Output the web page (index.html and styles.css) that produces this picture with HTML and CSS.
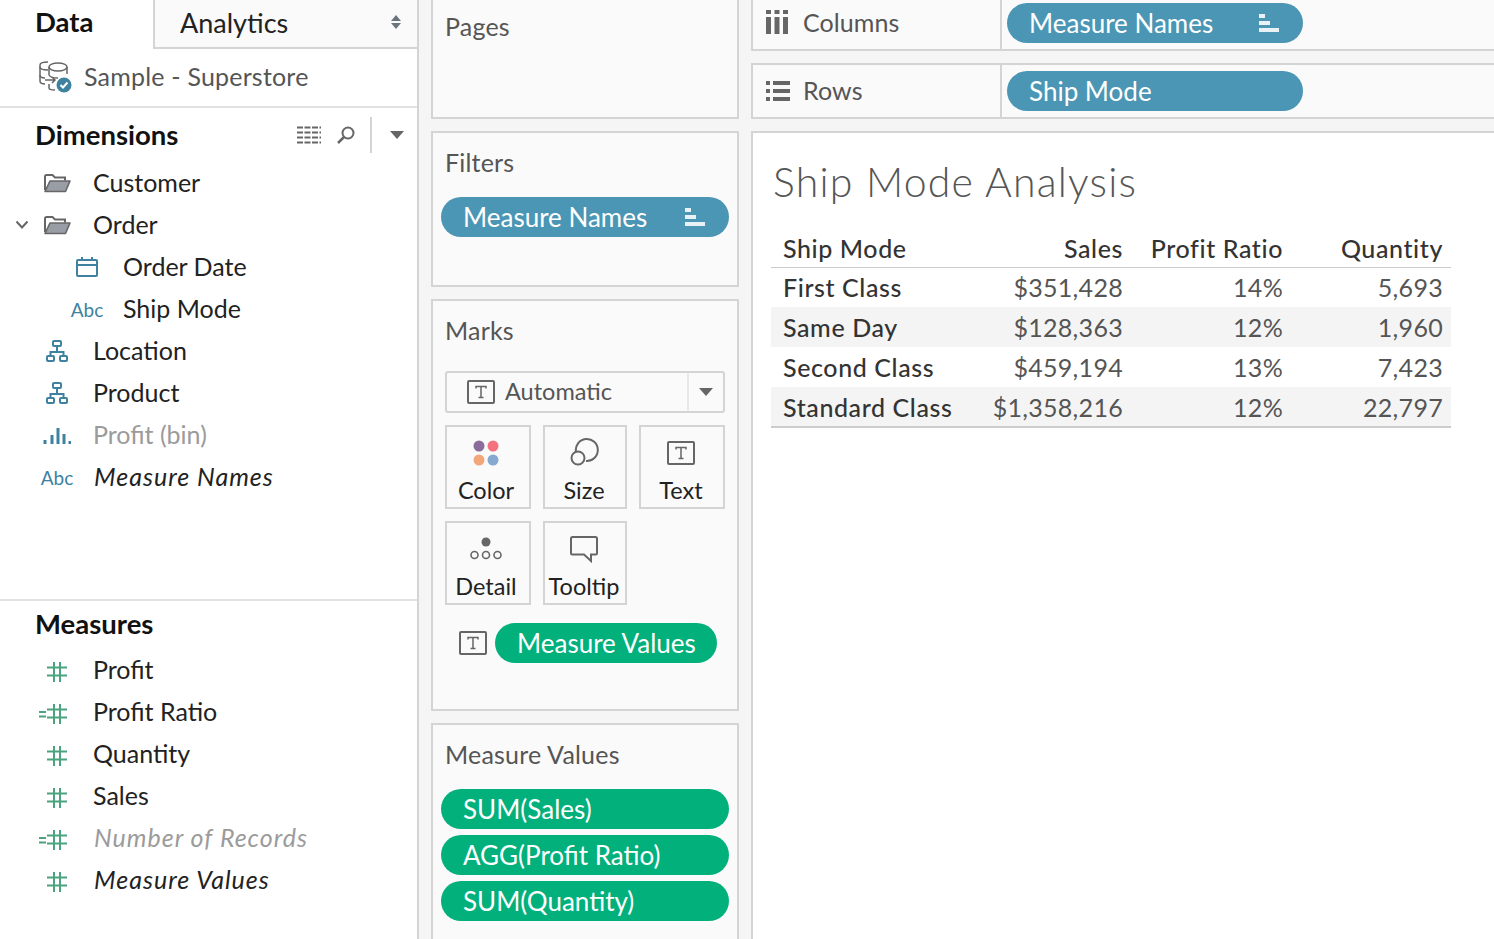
FILE: index.html
```html
<!DOCTYPE html>
<html lang="en">
<head>
<meta charset="utf-8">
<title>Ship Mode Analysis</title>
<link rel="stylesheet" href="styles.css">
</head>
<body>
<svg class="defs" width="0" height="0" aria-hidden="true">
  <defs>
    <symbol id="folder" viewBox="0 0 28 20">
      <path d="M2 17V3.500C2 2.700 2.600 2 3.500 2H9.500L12 4.500H22V7.500" fill="none" stroke="#666" stroke-width="2"/>
      <path d="M7 8H27L22.500 18.500H2Z" fill="#999ea6" stroke="#666" stroke-width="1.600" stroke-linejoin="round"/>
    </symbol>
    <symbol id="hier" viewBox="0 0 24 24">
      <g fill="none" stroke="#3f82a0" stroke-width="2">
        <rect x="8" y="2" width="8" height="5" rx="1"/>
        <rect x="2" y="17" width="7" height="5" rx="1"/>
        <rect x="15" y="17" width="7" height="5" rx="1"/>
        <path d="M12 7V13M5.500 17V13H18.500V17"/>
      </g>
    </symbol>
    <symbol id="hash" viewBox="0 0 20 20">
      <path d="M7 0V20M13 0V20M0 5.500H20M0 13.500H20" fill="none" stroke="#4ba37d" stroke-width="2"/>
    </symbol>
    <symbol id="calc" viewBox="0 0 7 7">
      <path d="M0 1H7M0 5.500H7" fill="none" stroke="#4ba37d" stroke-width="2"/>
    </symbol>
    <symbol id="tbox" viewBox="0 0 28 24">
      <rect x="1" y="1" width="26" height="22" rx="1" fill="none" stroke="#666" stroke-width="2"/>
      <path d="M9 8.500V6.500H19V8.500M14 6.500V17.500M11.500 17.500H16.500" fill="none" stroke="#666" stroke-width="1.500"/>
    </symbol>
    <symbol id="sortbars" viewBox="0 0 20 20">
      <path d="M0 1H6V5H0ZM0 8H11V12H0ZM0 15H20V19H0Z" fill="#e8f1f5"/>
    </symbol>
  </defs>
</svg>
<div class="app">
  <aside class="data-pane">
    <div class="tabs">
      <div class="tab-active">Data</div>
      <div class="tab-other">
        <span>Analytics</span>
        <svg class="updown" width="12" height="16" viewBox="0 0 12 16"><path d="M6 1L11 7H1ZM1 9H11L6 15Z" fill="#6c7480"/></svg>
      </div>
    </div>
    <div class="source">
      <svg class="db-icon" width="34" height="34" viewBox="0 0 34 34">
        <g fill="none" stroke="#666" stroke-width="1.500">
          <path d="M10 3C6 3 2 4 2 6V22C2 24 4 25 7 25"/>
          <path d="M2 8C2 10 6 11 10 11M2 16C2 18 4 19 7 19"/>
          <ellipse cx="20" cy="8" rx="9" ry="4"/>
          <path d="M11 8V16M29 8V15M11 16C12 18 16 19 20 19"/>
          <path d="M7 21H17M14 18L17 21L14 24"/>
          <path d="M11 25V29C11 30 13 31 17 31"/>
        </g>
        <circle cx="26" cy="26" r="7.500" fill="#3f82a0"/>
        <path d="M22.500 26L25 28.500L29.500 23.500" fill="none" stroke="#fff" stroke-width="2"/>
      </svg>
      <span>Sample - Superstore</span>
    </div>
    <section class="dims">
      <div class="pane-head">
        <h2>Dimensions</h2>
        <div class="head-tools">
          <svg width="24" height="18" viewBox="0 0 24 18"><path d="M0 1.500H24M0 6.500H24M0 11.500H24M0 16.500H24" stroke="#666" stroke-width="2" stroke-dasharray="6 1.500" fill="none"/></svg>
          <svg class="search" width="20" height="20" viewBox="0 0 20 20"><circle cx="12" cy="8" r="5.500" fill="none" stroke="#666" stroke-width="2"/><path d="M8 12L2 18" stroke="#666" stroke-width="2.500"/></svg>
          <i class="tool-sep"></i>
          <i class="caret"></i>
        </div>
      </div>
      <div class="field"><span class="slot"></span><span class="ico"><svg width="28" height="20"><use href="#folder"/></svg></span><span>Customer</span></div>
      <div class="field"><span class="slot"><svg width="14" height="10" viewBox="0 0 14 10"><path d="M1.500 1.500L7 7.500L12.500 1.500" fill="none" stroke="#666" stroke-width="2"/></svg></span><span class="ico"><svg width="28" height="20"><use href="#folder"/></svg></span><span>Order</span></div>
      <div class="field nested"><span class="slot"></span><span class="ico"><svg width="24" height="22" viewBox="0 0 24 22"><g fill="none" stroke="#3f82a0" stroke-width="2"><rect x="2" y="4" width="20" height="16" rx="1"/><path d="M2 9H22M7 1V5M17 1V5"/></g></svg></span><span>Order Date</span></div>
      <div class="field nested"><span class="slot"></span><span class="ico abc">Abc</span><span>Ship Mode</span></div>
      <div class="field"><span class="slot"></span><span class="ico"><svg width="24" height="24"><use href="#hier"/></svg></span><span>Location</span></div>
      <div class="field"><span class="slot"></span><span class="ico"><svg width="24" height="24"><use href="#hier"/></svg></span><span>Product</span></div>
      <div class="field muted"><span class="slot"></span><span class="ico"><svg width="28" height="20" viewBox="0 0 28 20"><path d="M2 15V19M9 10V19M15 3V19M21 9V19M27 16V19" stroke="#3f82a0" stroke-width="3" fill="none"/></svg></span><span>Profit (bin)</span></div>
      <div class="field generated"><span class="slot"></span><span class="ico abc">Abc</span><span>Measure Names</span></div>
    </section>
    <section class="meas">
      <div class="pane-head meas-head"><h2>Measures</h2></div>
      <div class="field"><span class="slot"></span><span class="ico"><svg width="20" height="20"><use href="#hash"/></svg></span><span>Profit</span></div>
      <div class="field"><span class="slot"></span><span class="ico"><svg class="calc" width="7" height="7"><use href="#calc"/></svg><svg width="20" height="20"><use href="#hash"/></svg></span><span>Profit Ratio</span></div>
      <div class="field"><span class="slot"></span><span class="ico"><svg width="20" height="20"><use href="#hash"/></svg></span><span>Quantity</span></div>
      <div class="field"><span class="slot"></span><span class="ico"><svg width="20" height="20"><use href="#hash"/></svg></span><span>Sales</span></div>
      <div class="field generated muted"><span class="slot"></span><span class="ico"><svg class="calc" width="7" height="7"><use href="#calc"/></svg><svg width="20" height="20"><use href="#hash"/></svg></span><span>Number of Records</span></div>
      <div class="field generated"><span class="slot"></span><span class="ico"><svg width="20" height="20"><use href="#hash"/></svg></span><span>Measure Values</span></div>
    </section>
  </aside>

  <div class="cards">
    <section class="card card-pages"><h3>Pages</h3></section>
    <section class="card card-filters">
      <h3>Filters</h3>
      <div class="pill blue between">Measure Names<svg width="20" height="20"><use href="#sortbars"/></svg></div>
    </section>
    <section class="card card-marks">
      <h3>Marks</h3>
      <div class="mark-type">
        <div class="mark-name"><svg width="28" height="24"><use href="#tbox"/></svg><span>Automatic</span></div>
        <div class="mark-drop"><i class="caret"></i></div>
      </div>
      <div class="tiles">
        <div class="tile tile-color">
          <svg width="28" height="28" viewBox="0 0 28 28"><circle cx="7" cy="7" r="5.500" fill="#8a6d9b"/><circle cx="21" cy="7" r="5.500" fill="#f4717f"/><circle cx="7" cy="21" r="5.500" fill="#f2a77b"/><circle cx="21" cy="21" r="5.500" fill="#85a9cf"/></svg>
          <span>Color</span>
        </div>
        <div class="tile tile-size">
          <svg width="30" height="28" viewBox="0 0 30 28"><path d="M7 14A11 11 0 1 1 17 23" fill="none" stroke="#666" stroke-width="2"/><circle cx="9" cy="20" r="6.500" fill="none" stroke="#666" stroke-width="2"/></svg>
          <span>Size</span>
        </div>
        <div class="tile tile-text">
          <svg width="28" height="24"><use href="#tbox"/></svg>
          <span>Text</span>
        </div>
        <div class="tile tile-detail">
          <svg width="32" height="24" viewBox="0 0 32 24"><circle cx="16" cy="5" r="4.500" fill="#666"/><g fill="none" stroke="#666" stroke-width="1.600"><circle cx="4.500" cy="18" r="3.500"/><circle cx="16" cy="18" r="3.500"/><circle cx="27.500" cy="18" r="3.500"/></g></svg>
          <span>Detail</span>
        </div>
        <div class="tile tile-tip">
          <svg width="30" height="28" viewBox="0 0 30 28"><path d="M2 3.500C2 2.500 2.500 2 3.500 2H26.500C27.500 2 28 2.500 28 3.500V18C28 19 27.500 19.500 26.500 19.500H22V26L15 19.500H3.500C2.500 19.500 2 19 2 18Z" fill="none" stroke="#666" stroke-width="2"/></svg>
          <span>Tooltip</span>
        </div>
      </div>
      <div class="mark-pill-row">
        <svg width="28" height="24"><use href="#tbox"/></svg>
        <div class="pill green">Measure Values</div>
      </div>
    </section>
    <section class="card card-values">
      <h3>Measure Values</h3>
      <div class="pill-stack">
        <div class="pill green">SUM(Sales)</div>
        <div class="pill green">AGG(Profit Ratio)</div>
        <div class="pill green">SUM(Quantity)</div>
      </div>
    </section>
  </div>

  <main class="work">
    <div class="shelf shelf-cols">
      <div class="shelf-label">
        <svg width="22" height="24" viewBox="0 0 22 24"><path d="M0 0H5V4H0ZM8.500 0H13.500V4H8.500ZM17 0H22V4H17ZM0 7H5V24H0ZM8.500 7H13.500V24H8.500ZM17 7H22V24H17Z" fill="#666"/></svg>
        <span>Columns</span>
      </div>
      <div class="shelf-body"><div class="pill blue between shelf-pill">Measure Names<svg width="20" height="20"><use href="#sortbars"/></svg></div></div>
    </div>
    <div class="shelf shelf-rows">
      <div class="shelf-label">
        <svg width="24" height="20" viewBox="0 0 24 20"><path d="M0 0H4V4H0ZM7 0H24V4H7ZM0 8H4V12H0ZM7 8H24V12H7ZM0 16H4V20H0ZM7 16H24V20H7Z" fill="#666"/></svg>
        <span>Rows</span>
      </div>
      <div class="shelf-body"><div class="pill blue shelf-pill">Ship Mode</div></div>
    </div>
    <section class="view">
      <h1>Ship Mode Analysis</h1>
      <table class="crosstab">
        <thead>
          <tr><th class="name">Ship Mode</th><th>Sales</th><th>Profit Ratio</th><th>Quantity</th></tr>
        </thead>
        <tbody>
          <tr><th class="name">First Class</th><td>$351,428</td><td>14%</td><td>5,693</td></tr>
          <tr class="band"><th class="name">Same Day</th><td>$128,363</td><td>12%</td><td>1,960</td></tr>
          <tr><th class="name">Second Class</th><td>$459,194</td><td>13%</td><td>7,423</td></tr>
          <tr class="band"><th class="name">Standard Class</th><td>$1,358,216</td><td>12%</td><td>22,797</td></tr>
        </tbody>
      </table>
    </section>
  </main>
</div>
</body>
</html>
```

FILE: styles.css
```css
* { box-sizing: border-box; }
html, body { margin: 0; height: 100%; }
body {
  background: #f5f5f5;
  color: #222;
  font-family: "Lato", "Liberation Sans", sans-serif;
  font-size: 25px;
  overflow: hidden;
}
.defs { position: absolute; }
.app { display: flex; height: 939px; overflow: hidden; }
svg { display: block; flex: none; }

.data-pane {
  width: 419px;
  flex: none;
  background: #fff;
  border-right: 2px solid #d4d4d4;
  display: flex;
  flex-direction: column;
}
.tabs { display: flex; height: 49px; }
.tab-active { width: 153px; padding-left: 35px; font-weight: 700; font-size: 27.500px; color: #111; line-height: 44px; }
.tab-other {
  flex: 1;
  background: #fafafa;
  border-left: 2px solid #d4d4d4;
  border-bottom: 2px solid #d4d4d4;
  display: flex;
  align-items: center;
  justify-content: space-between;
  padding: 0 15px 3px 25px;
  font-size: 27px;
}
.source { height: 59px; border-bottom: 2px solid #e2e2e2; display: flex; align-items: center; padding: 0 0 4px 38px; gap: 12px; color: #555; letter-spacing: .2px; }
.dims { height: 493px; border-bottom: 2px solid #e2e2e2; }
.pane-head { height: 53px; display: flex; align-items: center; justify-content: space-between; padding: 0 13px 0 35px; }
.meas-head { height: 47px; padding-bottom: 3px; }
h2 { margin: 0; font-size: 27.500px; font-weight: 700; color: #111; }
.head-tools { display: flex; align-items: center; gap: 13px; }
.search { margin-left: 2px; }
.tool-sep { width: 2px; height: 36px; background: #d4d4d4; margin: 0 5px 0 1px; }
.caret { display: block; width: 0; height: 0; border: 7px solid transparent; border-top: 8px solid #666; border-bottom: 0; }

.field { height: 42px; display: flex; align-items: center; }
.slot { width: 37px; flex: none; display: flex; justify-content: flex-end; padding: 2px 8px 0 0; }
.ico { width: 40px; flex: none; margin: 2px 16px 0 0; display: flex; justify-content: center; align-items: center; position: relative; }
.meas .ico { margin-top: 6px; }
.calc { position: absolute; left: 2px; top: 7px; }
.abc { font-size: 19px; color: #3f82a0; font-style: normal; }
.nested { padding-left: 30px; }
.muted { color: #9b9b9b; }
.generated { font-style: italic; letter-spacing: 1px; }
.generated .abc { letter-spacing: 0; }
.generated > span:last-child { margin-left: 1px; }

.cards { width: 308px; flex: none; margin: 0 12px; display: flex; flex-direction: column; gap: 12px; }
.card { background: #fafafa; border: 2px solid #d4d4d4; padding: 0 8px; flex: none; }
.card h3 { margin: 0; height: 64px; padding: 0 0 6px 4px; display: flex; align-items: center; font-size: 25px; font-weight: 400; color: #555; letter-spacing: .2px; }
.card-pages { height: 119px; border-top: 0; }
.card-pages h3 { height: 54px; padding-bottom: 2px; }
.card-filters { height: 156px; }
.card-marks { height: 412px; }
.card-values { height: 240px; }

.pill { height: 40px; border-radius: 20px; color: #fff; padding: 0 21px 1px 22px; display: flex; align-items: center; font-size: 26px; white-space: nowrap; }
.between { justify-content: space-between; padding-right: 24px; }
.blue { background: #4b96b4; }
.green { background: #02b07c; }
.pill-stack { display: flex; flex-direction: column; gap: 6px; }

.mark-type { margin: 6px 4px 12px; height: 42px; width: 280px; display: flex; border: 2px solid #d4d4d4; border-radius: 3px; }
.mark-name { flex: 1; display: flex; align-items: center; gap: 10px; padding-left: 20px; color: #555; border-right: 2px solid #e8e8e8; font-size: 23.500px; }
.mark-name span { margin-bottom: 2px; }
.mark-drop { width: 34px; display: flex; align-items: center; justify-content: center; }
.tiles { margin: 0 4px; width: 280px; display: grid; grid-template-columns: 86px 84px 86px; gap: 12px; }
.tile { height: 84px; border: 2px solid #d4d4d4; display: flex; flex-direction: column; align-items: center; padding: 11px 2px 3px 0; font-size: 23.500px; color: #222; }
.tile span { margin-top: auto; }
.tile-color { padding-top: 12px; padding-right: 4px; }
.tile-size { padding-top: 11px; }
.tile-text { padding-top: 14px; padding-right: 2px; }
.tile-detail { padding-top: 14px; padding-right: 4px; }
.tile-tip { padding-top: 12px; }
.mark-pill-row { display: flex; align-items: center; gap: 8px; margin: 18px 12px 0 18px; }
.mark-pill-row .pill { flex: 1; }

.work { flex: 1; min-width: 0; display: flex; flex-direction: column; }
.shelf { display: flex; background: #fafafa; border: 2px solid #d4d4d4; border-right: 0; }
.shelf-cols { height: 51px; border-top: 0; margin-bottom: 12px; }
.shelf-rows { height: 56px; margin-bottom: 12px; }
.shelf-label { width: 249px; border-right: 2px solid #d4d4d4; display: flex; align-items: center; gap: 15px; padding-left: 13px; color: #555; }
.shelf-label span { margin-bottom: 2px; letter-spacing: .1px; }
.shelf-cols .shelf-label span { margin-bottom: 5px; }
.shelf-cols .shelf-label svg { margin-bottom: 5px; }
.shelf-rows .shelf-label { gap: 13px; }
.shelf-body { padding: 3px 5px; }
.shelf-rows .shelf-body { padding-top: 6px; }
.shelf-pill { width: 296px; }

.view { flex: 1; background: #fff; border-top: 2px solid #d4d4d4; border-left: 2px solid #d4d4d4; padding: 21px 0 0 18px; }
h1 { margin: 0; font-size: 41px; line-height: 56px; font-weight: 300; color: #555; padding-left: 2px; letter-spacing: 1.200px; }
.crosstab { margin-top: 19px; border-collapse: collapse; table-layout: fixed; width: 680px; border-bottom: 2px solid #ccc; }
.crosstab th, .crosstab td { padding: 0 8px 0 0; height: 40px; text-align: right; font-weight: 400; white-space: nowrap; color: #555; letter-spacing: .3px; }
.crosstab th { color: #333; font-weight: 500; letter-spacing: .6px; }
.crosstab th.name { text-align: left; padding-left: 12px; width: 200px; }
.crosstab thead th { height: 38px; border-bottom: 1px solid #ccc; }
.band { background: #f4f4f4; }
```
